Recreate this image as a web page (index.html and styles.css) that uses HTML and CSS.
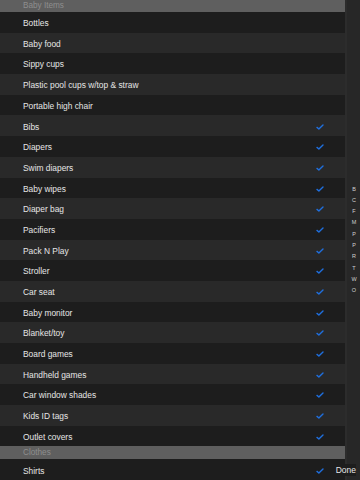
FILE: index.html
```html
<!DOCTYPE html>
<html>
<head>
<meta charset="utf-8">
<link rel="stylesheet" href="styles.css">
</head>
<body>
<div class="screen">
  <div class="list">
    <div class="section first">Baby Items</div>
    <div class="row">Bottles</div>
    <div class="row alt">Baby food</div>
    <div class="row">Sippy cups</div>
    <div class="row alt">Plastic pool cups w/top &amp; straw</div>
    <div class="row">Portable high chair</div>
    <div class="row alt checked">Bibs<svg class="check" viewBox="0 0 8 6"><path d="M1 3.4 L2.9 5 L7 1"/></svg></div>
    <div class="row checked">Diapers<svg class="check" viewBox="0 0 8 6"><path d="M1 3.4 L2.9 5 L7 1"/></svg></div>
    <div class="row alt checked">Swim diapers<svg class="check" viewBox="0 0 8 6"><path d="M1 3.4 L2.9 5 L7 1"/></svg></div>
    <div class="row checked">Baby wipes<svg class="check" viewBox="0 0 8 6"><path d="M1 3.4 L2.9 5 L7 1"/></svg></div>
    <div class="row alt checked">Diaper bag<svg class="check" viewBox="0 0 8 6"><path d="M1 3.4 L2.9 5 L7 1"/></svg></div>
    <div class="row checked">Pacifiers<svg class="check" viewBox="0 0 8 6"><path d="M1 3.4 L2.9 5 L7 1"/></svg></div>
    <div class="row alt checked">Pack N Play<svg class="check" viewBox="0 0 8 6"><path d="M1 3.4 L2.9 5 L7 1"/></svg></div>
    <div class="row checked">Stroller<svg class="check" viewBox="0 0 8 6"><path d="M1 3.4 L2.9 5 L7 1"/></svg></div>
    <div class="row alt checked">Car seat<svg class="check" viewBox="0 0 8 6"><path d="M1 3.4 L2.9 5 L7 1"/></svg></div>
    <div class="row checked">Baby monitor<svg class="check" viewBox="0 0 8 6"><path d="M1 3.4 L2.9 5 L7 1"/></svg></div>
    <div class="row alt checked">Blanket/toy<svg class="check" viewBox="0 0 8 6"><path d="M1 3.4 L2.9 5 L7 1"/></svg></div>
    <div class="row checked">Board games<svg class="check" viewBox="0 0 8 6"><path d="M1 3.4 L2.9 5 L7 1"/></svg></div>
    <div class="row alt checked">Handheld games<svg class="check" viewBox="0 0 8 6"><path d="M1 3.4 L2.9 5 L7 1"/></svg></div>
    <div class="row checked">Car window shades<svg class="check" viewBox="0 0 8 6"><path d="M1 3.4 L2.9 5 L7 1"/></svg></div>
    <div class="row alt checked">Kids ID tags<svg class="check" viewBox="0 0 8 6"><path d="M1 3.4 L2.9 5 L7 1"/></svg></div>
    <div class="row checked">Outlet covers<svg class="check" viewBox="0 0 8 6"><path d="M1 3.4 L2.9 5 L7 1"/></svg></div>
    <div class="section">Clothes</div>
    <div class="row checked">Shirts<svg class="check" viewBox="0 0 8 6"><path d="M1 3.4 L2.9 5 L7 1"/></svg></div>
  </div>
  <div class="index">
    <span>B</span><span>C</span><span>F</span><span>M</span><span>P</span><span>P</span><span>R</span><span>T</span><span>W</span><span>O</span>
  </div>
  <div class="done">Done</div>
</div>
</body>
</html>
```
FILE: styles.css
```css
html, body {
  margin: 0;
  padding: 0;
  background: #1d1d1d;
}
body {
  width: 360px;
  height: 480px;
  overflow: hidden;
  font-family: "Liberation Sans", Arial, sans-serif;
}
.screen {
  position: relative;
  display: flex;
  width: 360px;
  height: 480px;
  overflow: hidden;
}
.list {
  width: 345px;
  flex: none;
  margin-top: -1px;
}
.section {
  box-sizing: border-box;
  height: 13px;
  line-height: 12px;
  padding-top: 1px;
  background: #5f5f5f;
  color: #8e8e8e;
  font-size: 8.2px;
  padding-left: 23px;
}
.row {
  box-sizing: border-box;
  height: 20.7px;
  background: #1d1d1d;
  color: #e6e6e6;
  font-size: 8.4px;
  padding: 1.5px 21px 0 23px;
  display: flex;
  align-items: center;
  justify-content: space-between;
}
.row.alt {
  background: #292929;
}
.check {
  width: 8px;
  height: 6px;
  fill: none;
  stroke: #1f6fde;
  stroke-width: 1.4;
  stroke-linecap: round;
  stroke-linejoin: round;
}
.index {
  width: 15px;
  flex: none;
  background: #272727;
  border-left: 2px solid #2c2c2c;
  box-sizing: border-box;
  display: flex;
  flex-direction: column;
  justify-content: center;
  align-items: center;
  padding-left: 1px;
}
.index span {
  display: block;
  height: 11.3px;
  line-height: 11.3px;
  font-size: 5.5px;
  color: #d0d0d0;
}
.done {
  position: absolute;
  right: 4px;
  bottom: 4px;
  font-size: 8.5px;
  color: #e8e8e8;
  background: #1d1d1d;
  padding: 1px 0 1px 1px;
}
```
